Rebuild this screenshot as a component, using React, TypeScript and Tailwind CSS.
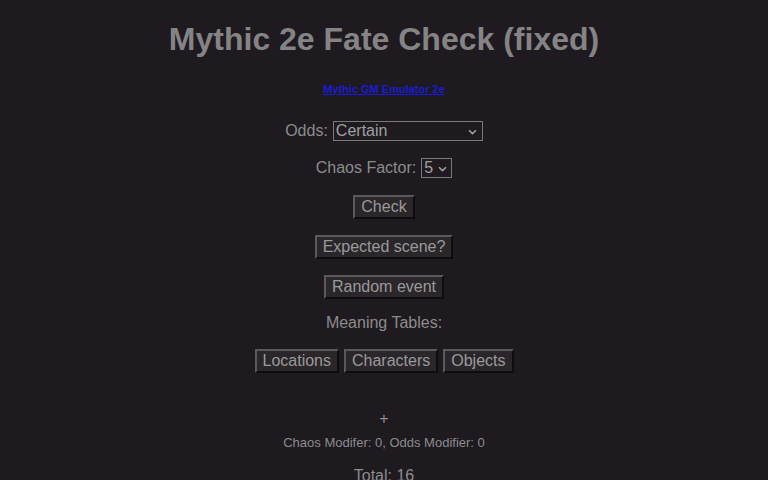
import { useState } from 'react'

const odds = ['Certain', 'Nearly Certain', 'Very Likely', 'Likely', '50/50', 'Unlikely', 'Very Unlikely', 'Nearly Impossible', 'Impossible']

const btn =
  'bg-[#2a262a] text-[#9a9a9a] text-[16px] leading-[18px] px-[6px] py-px border-2 border-t-[#5c585c] border-l-[#5c585c] border-b-[#0e0c0f] border-r-[#0e0c0f]'

function Chevron() {
  return (
    <svg width="9" height="6" viewBox="0 0 9 6" className="shrink-0">
      <path d="M1 1.2 L4.5 4.6 L8 1.2" fill="none" stroke="#a0a0a0" strokeWidth="1.6" />
    </svg>
  )
}

export default function App() {
  const [odd, setOdd] = useState('Certain')
  const [chaos, setChaos] = useState('5')

  return (
    <div className="min-h-screen bg-[#1e1a20] text-[#8c8c8c] font-['Liberation_Sans',Arial,sans-serif] flex flex-col items-center text-center">
      <h1 className="mt-[21px] text-[32px] leading-[37px] font-bold text-[#848484]">Mythic 2e Fate Check (fixed)</h1>

      <a href="#" className="mt-[25px] text-[11px] leading-[13px] font-bold text-[#1a1ad8] underline">
        Mythic GM Emulator 2e
      </a>

      <div className="mt-[25px] flex items-center gap-[5px] text-[16px] h-[20px]">
        <span>Odds:</span>
        <label className="relative flex items-center w-[150px] h-[20px] border border-[#7a767a] bg-[#1e1a20]">
          <select
            value={odd}
            onChange={(e) => setOdd(e.target.value)}
            className="appearance-none w-full h-full bg-transparent text-[#a0a0a0] text-[16px] leading-[18px] pl-[2px] outline-none"
          >
            {odds.map((o) => (
              <option key={o}>{o}</option>
            ))}
          </select>
          <span className="absolute right-[5px] top-[7px] pointer-events-none">
            <Chevron />
          </span>
        </label>
      </div>

      <div className="mt-[17px] flex items-center gap-[5px] text-[16px] h-[20px]">
        <span>Chaos Factor:</span>
        <label className="relative flex items-center w-[31px] h-[20px] border border-[#7a767a]">
          <select
            value={chaos}
            onChange={(e) => setChaos(e.target.value)}
            className="appearance-none w-full h-full bg-transparent text-[#a0a0a0] text-[16px] leading-[18px] pl-[2px] outline-none"
          >
            {['1', '2', '3', '4', '5', '6', '7', '8', '9'].map((c) => (
              <option key={c}>{c}</option>
            ))}
          </select>
          <span className="absolute right-[4px] top-[7px] pointer-events-none">
            <Chevron />
          </span>
        </label>
      </div>

      <button className={`${btn} mt-[17px]`}>Check</button>
      <button className={`${btn} mt-[16px]`}>Expected scene?</button>
      <button className={`${btn} mt-[16px]`}>Random event</button>

      <p className="mt-[15px] text-[16px] leading-[18px]">Meaning Tables:</p>

      <div className="mt-[17px] flex gap-[5px]">
        <button className={btn}>Locations</button>
        <button className={btn}>Characters</button>
        <button className={btn}>Objects</button>
      </div>

      <p className="mt-[37px] text-[16px] leading-[18px]">+</p>
      <p className="mt-[7px] text-[13px] leading-[15px]">Chaos Modifer: 0, Odds Modifier: 0</p>
      <p className="mt-[17px] text-[16px] leading-[18px]">Total: 16</p>
    </div>
  )
}
